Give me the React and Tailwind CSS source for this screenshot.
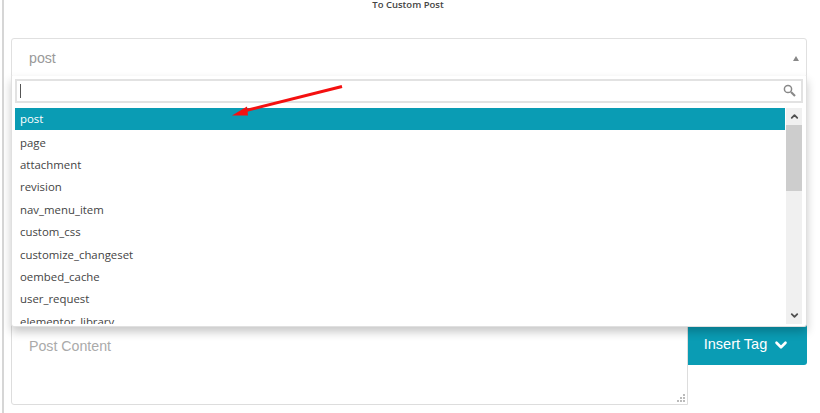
import { ChevronDown, ChevronUp } from 'lucide-react';

const postTypes = [
  'page',
  'attachment',
  'revision',
  'nav_menu_item',
  'custom_css',
  'customize_changeset',
  'oembed_cache',
  'user_request',
  'elementor_library',
];

function SearchIcon() {
  return (
    <svg width="13" height="13" viewBox="0 0 13 13" fill="none" stroke="#888" className="absolute right-[5px] top-[3px]">
      <circle cx="5" cy="5" r="3.6" strokeWidth="1.5" />
      <path d="M8 8l4 4" strokeWidth="2.2" />
    </svg>
  );
}

function Dropdown() {
  return (
    <div className="absolute left-0 top-[38px] z-10 h-[251px] w-[796px] overflow-hidden rounded-b-[3px] border border-t-0 border-[#e0e0e0] bg-white px-[3px] pt-[3px] shadow-[0_5px_10px_rgba(0,0,0,0.22)]">
      <div className="relative h-[24px] w-[788px] border-2 border-[#e2e2e2] bg-white">
        <div className="ml-[3px] mt-[3px] h-[14px] w-px bg-[#555]" />
        <SearchIcon />
      </div>
      <div className="mt-[5px] flex h-[216px] w-[788px] overflow-hidden">
        <div className="w-[770px]">
          <div className="mb-[1px] flex h-[22px] items-center bg-[#0a9cb4] pl-[5px] text-[11.4px] text-white">post</div>
          {postTypes.map((name) => (
            <div key={name} className="flex h-[22.4px] items-center pl-[5px] text-[11.4px] text-[#444]">{name}</div>
          ))}
        </div>
        <div className="ml-px flex h-[216px] w-[16px] flex-col items-center justify-between bg-[#f0f0f0]">
          <div className="w-full">
            <div className="flex h-[17px] items-center justify-center">
              <ChevronUp size={11} strokeWidth={4} color="#505050" />
            </div>
            <div className="h-[66px] w-full bg-[#cdcdcd]" />
          </div>
          <div className="flex h-[17px] items-center justify-center">
            <ChevronDown size={11} strokeWidth={4} color="#505050" />
          </div>
        </div>
      </div>
    </div>
  );
}

export default function App() {
  return (
    <div className="h-[413px] w-[820px] overflow-hidden bg-white font-['Open_Sans',sans-serif]">
      <div className="ml-[2px] h-full border-l-2 border-[#d6d6d6] pl-[7px]">
        <p className="h-[38px] w-[794px] text-center text-[9.5px] font-semibold leading-[9px] text-[#444]">To Custom Post</p>

        <div className="relative w-[796px]">
          <div className="relative flex h-[40px] items-center rounded-[3px] border border-[#e0e0e0] pl-[17px] pt-[1px] font-['Liberation_Sans',sans-serif] text-[14.2px] text-[#999]">
            post
            <span className="absolute right-[7px] top-[17px] h-0 w-0 border-x-[3.5px] border-b-[5px] border-x-transparent border-b-[#888]" />
          </div>
          <Dropdown />
        </div>

        <div className="mt-[244px] flex w-[796px] items-start">
          <div className="relative h-[83px] w-[677px] rounded-bl-[3px] border border-[#ddd] pl-[17px] pt-[15px] font-['Liberation_Sans',sans-serif] text-[14.2px] leading-[17px] text-[#aaa]">
            Post Content
            <svg width="9" height="9" viewBox="0 0 9 9" fill="#bbb" className="absolute bottom-[1px] right-[1px]">
              <rect x="6" y="0" width="2" height="2" />
              <rect x="3" y="3" width="2" height="2" />
              <rect x="6" y="3" width="2" height="2" />
              <rect x="0" y="6" width="2" height="2" />
              <rect x="3" y="6" width="2" height="2" />
              <rect x="6" y="6" width="2" height="2" />
            </svg>
          </div>
          <button className="flex h-[43px] w-[120px] -ml-px items-center justify-center gap-[5px] rounded-br-[3px] bg-[#0a9cb4] pt-[2px] font-['Liberation_Sans',sans-serif] text-[14.5px] text-white">
            Insert Tag
            <ChevronDown size={18} strokeWidth={3.5} />
          </button>
        </div>
      </div>

      {/* annotation arrow drawn over the screenshot */}
      <svg width="120" height="40" viewBox="0 0 120 40" className="absolute left-[230px] top-[83px] z-20">
        <path d="M112 3.5L16 27.5" stroke="#f41010" strokeWidth="3" />
        <path d="M2 32.5L17 23.5L18 32.5Z" fill="#f41010" />
      </svg>
    </div>
  );
}
